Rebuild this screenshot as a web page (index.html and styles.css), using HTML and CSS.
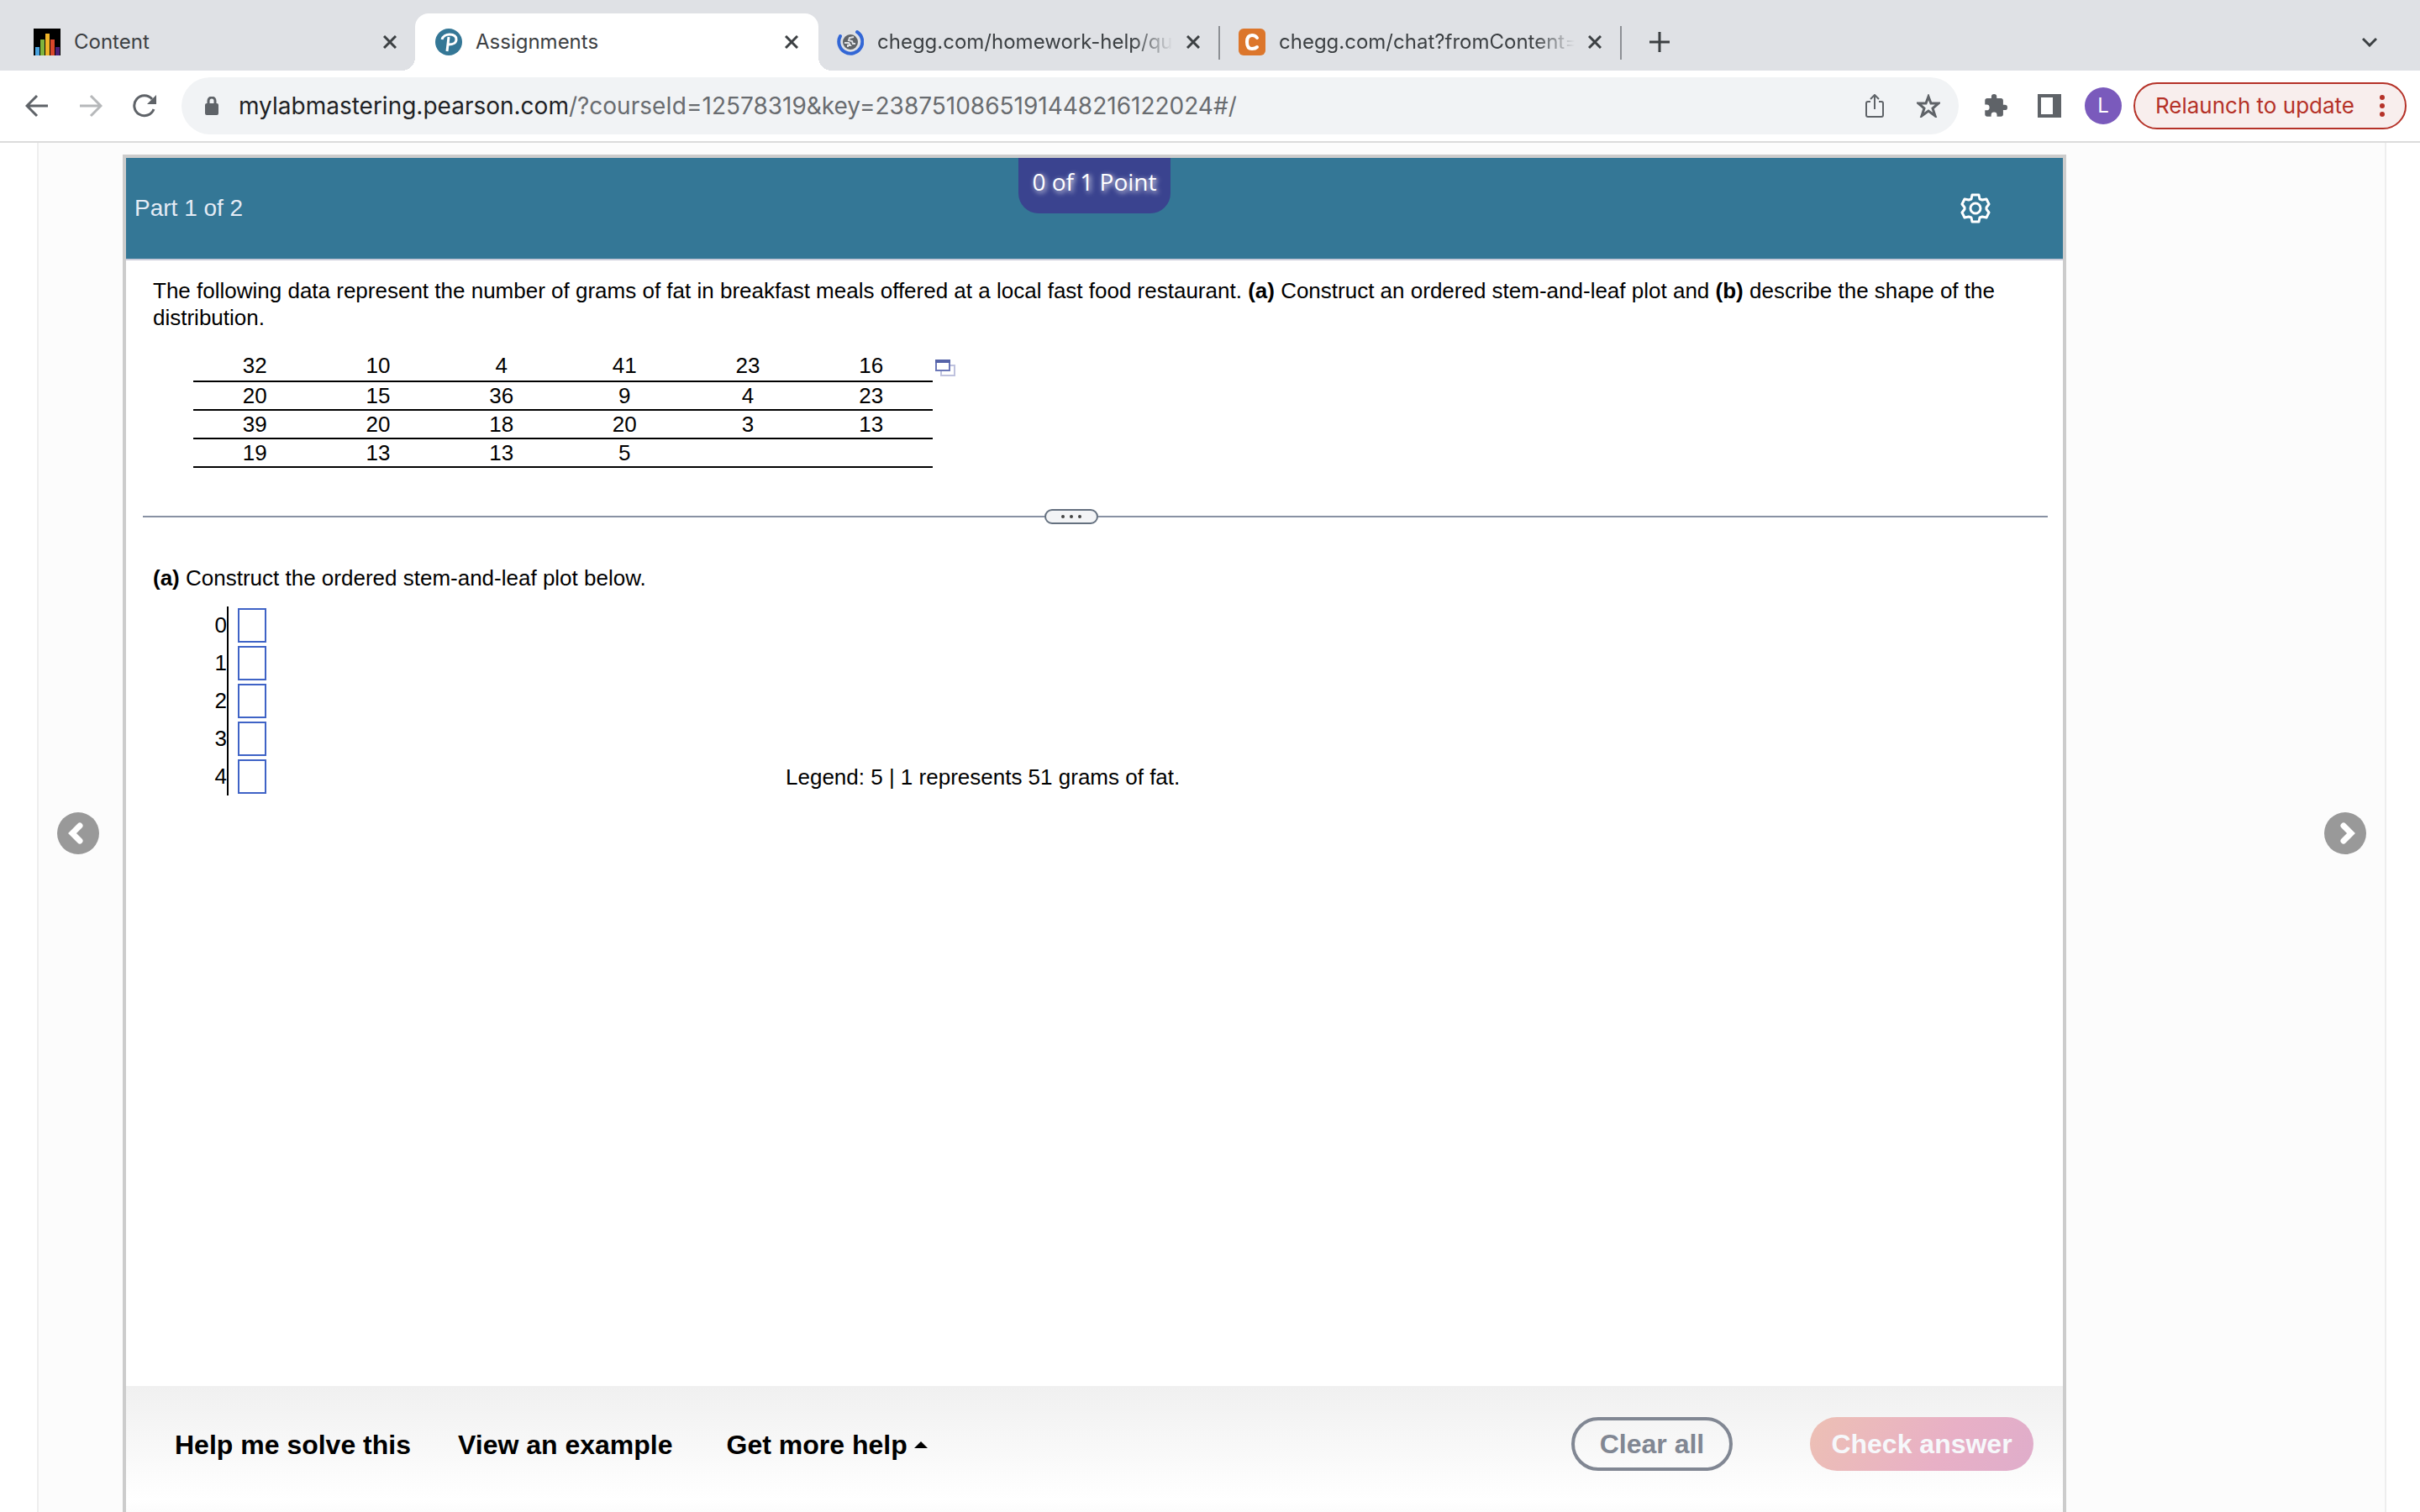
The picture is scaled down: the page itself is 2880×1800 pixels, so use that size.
FILE: index.html
```html
<!DOCTYPE html>
<html lang="en">
  <head>
    <meta charset="UTF-8" />
    <meta name="viewport" content="width=device-width, initial-scale=1.0" />
    <link rel="stylesheet" href="styles.css">
    <title>Assignments</title>
  </head>
  <body>
    <!-- tab strip -->
    <header class="tabs">
      <div class="tab">
        <svg class="favicon" viewBox="0 0 32 32">
          <rect width="32" height="32" fill="#000" />
          <rect x="2" y="22" width="5" height="10" fill="#4aa3df" />
          <rect x="8" y="13" width="5" height="19" fill="#7fb43c" />
          <rect x="14" y="6" width="5" height="26" fill="#f0b429" />
          <rect x="20" y="13" width="5" height="19" fill="#d9472b" />
          <rect x="26" y="22" width="5" height="10" fill="#4b1f7a" />
        </svg>
        <span class="title">Content</span>
        <button class="close" aria-label="Close tab">
          <svg viewBox="0 0 16 16"><path d="M1 1L15 15M15 1L1 15" /></svg>
        </button>
      </div>
      <div class="tab active">
        <svg class="favicon" viewBox="0 0 32 32">
          <circle cx="16" cy="16" r="16" fill="#347796" />
          <path d="M8 13C9 9 13 7 17 7C22 7 25 9 25 13C25 17 21 19 16 19M16 10L14 27" fill="none" stroke="#fff" stroke-width="3" />
        </svg>
        <span class="title">Assignments</span>
        <button class="close" aria-label="Close tab">
          <svg viewBox="0 0 16 16"><path d="M1 1L15 15M15 1L1 15" /></svg>
        </button>
      </div>
      <div class="tab divided">
        <svg class="favicon" viewBox="0 0 32 32">
          <path d="M4 9A14 14 0 1 0 24 4" fill="none" stroke="#3367d6" stroke-width="4" stroke-linecap="round" />
          <circle cx="16" cy="16" r="9" fill="#5f6368" />
          <path d="M9 17H14L16 20H13V22M20 10L15 11L14 14L18 15L19 18H22" fill="none" stroke="#dfe1e5" stroke-width="2" />
        </svg>
        <span class="title fade">chegg.com/homework-help/qu</span>
        <button class="close" aria-label="Close tab">
          <svg viewBox="0 0 16 16"><path d="M1 1L15 15M15 1L1 15" /></svg>
        </button>
      </div>
      <div class="tab divided">
        <svg class="favicon" viewBox="0 0 32 32">
          <rect width="32" height="32" rx="6" fill="#dc762b" />
          <path d="M22 11C20 8 18 8 16 8C12 8 10 11 10 16C10 21 12 24 16 24C18 24 20 24 22 22" fill="none" stroke="#fff" stroke-width="4" stroke-linecap="round" />
        </svg>
        <span class="title fade">chegg.com/chat?fromContent=</span>
        <button class="close" aria-label="Close tab">
          <svg viewBox="0 0 16 16"><path d="M1 1L15 15M15 1L1 15" /></svg>
        </button>
      </div>
      <button class="new-tab" aria-label="New tab">
        <svg viewBox="0 0 24 24"><path d="M12 0V24M0 12H24" /></svg>
      </button>
      <button class="tab-search" aria-label="Search tabs">
        <svg viewBox="0 0 18 12"><path d="M1 2L9 10L17 2" /></svg>
      </button>
    </header>

    <!-- toolbar -->
    <div class="toolbar">
      <button class="tool" aria-label="Back">
        <svg viewBox="0 0 28 28"><path class="line" d="M27 14H3M14 2L2 14L14 26" /></svg>
      </button>
      <button class="tool off" aria-label="Forward">
        <svg viewBox="0 0 28 28"><path class="line" d="M1 14H25M14 2L26 14L14 26" /></svg>
      </button>
      <button class="tool" aria-label="Reload">
        <svg viewBox="0 0 28 28">
          <path class="line" d="M25 18A12 12 0 1 1 23 6" />
          <path d="M28 1V12H17Z" />
        </svg>
      </button>
      <div class="address">
        <svg class="lock" viewBox="0 0 16 22">
          <path d="M2 8H14Q16 8 16 10V20Q16 22 14 22H2Q0 22 0 20V10Q0 8 2 8Z" />
          <path class="line" d="M4 9V5A4 4 0 0 1 12 5V9" />
        </svg>
        <a class="url" href="#/">mylabmastering.pearson.com<span>/?courseId=12578319&amp;key=2387510865191448216122024#/</span></a>
        <button class="tool" aria-label="Share">
          <svg viewBox="0 0 28 28"><path class="thin" d="M9 9H6Q4 9 4 11V25Q4 27 6 27H22Q24 27 24 25V11Q24 9 22 9H19M14 18V1M9 6L14 1L19 6" /></svg>
        </button>
        <button class="tool" aria-label="Bookmark">
          <svg viewBox="0 0 28 28"><path class="line" d="M14 3L17 11L26 11L19 17L22 26L14 20L6 26L9 17L2 11L11 11Z" /></svg>
        </button>
      </div>
      <button class="tool" aria-label="Extensions">
        <svg viewBox="1 1 22 22"><path d="M20.500 11H19V7c0-1.100-.9-2-2-2h-4V3.500a2.500 2.500 0 0 0-5 0V5H4c-1.100 0-2 .9-2 2v3.800h1.500a2.700 2.700 0 0 1 0 5.400H2V20c0 1.100.9 2 2 2h3.800v-1.500a2.700 2.700 0 0 1 5.400 0V22H17c1.100 0 2-.9 2-2v-4h1.500a2.500 2.500 0 0 0 0-5z" /></svg>
      </button>
      <button class="tool" aria-label="Side panel">
        <svg viewBox="0 0 28 28"><path fill-rule="evenodd" d="M0 0H28V28H0ZM4 4V24H18V4Z" /></svg>
      </button>
      <button class="avatar">L</button>
      <button class="relaunch">
        Relaunch to update
        <svg viewBox="0 0 6 26"><circle cx="3" cy="3" r="3" /><circle cx="3" cy="13" r="3" /><circle cx="3" cy="23" r="3" /></svg>
      </button>
    </div>

    <div class="page">
      <div class="side">
        <button class="nav" aria-label="Previous question">
          <svg viewBox="0 0 50 50"><path d="M27 16L18 25L27 34" /></svg>
        </button>
      </div>

      <main class="panel">
        <div class="panel-head">
          <span class="part">Part 1 of 2</span>
          <span class="points">0 of 1 Point</span>
          <button class="settings" aria-label="Settings">
            <svg viewBox="0 0 36 36">
              <path d="M14 2H22L23 7L26 8L31 7L34 13L31 17V19L34 23L31 29L26 28L23 29L22 34H14L13 29L10 28L5 29L2 23L5 19V17L2 13L5 7L10 8L13 7Z" />
              <circle cx="18" cy="18" r="6" />
            </svg>
          </button>
        </div>

        <section class="question">
          <p>The following data represent the number of grams of fat in breakfast meals offered at a local fast food restaurant. <b>(a)</b> Construct an ordered stem-and-leaf plot and <b>(b)</b> describe the shape of the distribution.</p>
          <div class="data">
            <table>
              <tr><td>32</td><td>10</td><td>4</td><td>41</td><td>23</td><td>16</td></tr>
              <tr><td>20</td><td>15</td><td>36</td><td>9</td><td>4</td><td>23</td></tr>
              <tr><td>39</td><td>20</td><td>18</td><td>20</td><td>3</td><td>13</td></tr>
              <tr><td>19</td><td>13</td><td>13</td><td>5</td><td></td><td></td></tr>
            </table>
            <button class="popup" aria-label="Open data">
              <svg viewBox="0 0 24 20">
                <rect x="7" y="7" width="16" height="12" fill="#fff" stroke="#bfc2de" stroke-width="2" />
                <rect x="1" y="1" width="16" height="12" fill="#fff" stroke="#6b77b8" stroke-width="2" />
                <rect x="0" y="0" width="18" height="4" fill="#5563a8" />
              </svg>
            </button>
          </div>
        </section>

        <div class="splitter">
          <button aria-label="Resize question"><i></i><i></i><i></i></button>
        </div>

        <section class="answer">
          <p><b>(a)</b> Construct the ordered stem-and-leaf plot below.</p>
          <div class="plot">
            <div class="stems">
              <div class="stem"><label for="leaf0">0</label><input id="leaf0" type="text" /></div>
              <div class="stem"><label for="leaf1">1</label><input id="leaf1" type="text" /></div>
              <div class="stem"><label for="leaf2">2</label><input id="leaf2" type="text" /></div>
              <div class="stem"><label for="leaf3">3</label><input id="leaf3" type="text" /></div>
              <div class="stem"><label for="leaf4">4</label><input id="leaf4" type="text" /></div>
            </div>
            <span class="legend">Legend: 5 | 1 represents 51 grams of fat.</span>
          </div>
        </section>

        <footer class="actions">
          <button class="link">Help me solve this</button>
          <button class="link">View an example</button>
          <button class="link more">Get more help <svg viewBox="0 0 16 8"><path d="M8 0L16 8H0Z" /></svg></button>
          <button class="clear">Clear all</button>
          <button class="check">Check answer</button>
        </footer>
      </main>

      <div class="side right">
        <button class="nav" aria-label="Next question">
          <svg viewBox="0 0 50 50"><path d="M23 16L32 25L23 34" /></svg>
        </button>
      </div>
    </div>
  </body>
</html>
```

FILE: styles.css
```css
/* Basic Style */

* {
  box-sizing: border-box;
}
body {
  display: flex;
  flex-direction: column;
  min-height: 100vh;
  margin: 0;
  background: #fff;
  color: #000;
  font-family: "Liberation Sans", Arial, sans-serif;
  font-size: 26px;
  line-height: 32px;
}
button {
  display: flex;
  align-items: center;
  justify-content: center;
  padding: 0;
  border: 0;
  background: none;
  color: inherit;
  font: inherit;
  cursor: pointer;
}
svg {
  display: block;
  flex: none;
}

/* Tabs */
.tabs {
  display: flex;
  align-items: flex-end;
  height: 84px;
  padding: 0 48px 0 16px;
  background: #dfe1e5;
  color: #3c4043;
  font-family: Inter, sans-serif;
  font-size: 24px;
}
.tab {
  position: relative;
  display: flex;
  align-items: center;
  gap: 16px;
  width: 478px;
  height: 68px;
  padding: 0 22px 0 24px;
}
.tab.active {
  width: 480px;
  padding-right: 24px;
  background: #fff;
  border-radius: 16px 16px 0 0;
}
/* curved feet of the selected tab */
.tab.active::before,
.tab.active::after {
  content: "";
  position: absolute;
  bottom: 0;
  width: 16px;
  height: 16px;
}
.tab.active::before {
  right: 100%;
  background: radial-gradient(circle at 0 0, #dfe1e5 16px, #fff 16px);
}
.tab.active::after {
  left: 100%;
  background: radial-gradient(circle at 100% 0, #dfe1e5 16px, #fff 16px);
}
.tab.divided {
  padding: 0 24px 0 22px;
}
.tab.divided::after {
  content: "";
  position: absolute;
  right: 0;
  top: 15px;
  width: 2px;
  height: 40px;
  background: #8d9095;
}
.favicon {
  width: 32px;
  height: 32px;
}
.title {
  flex: 1;
  overflow: hidden;
  white-space: nowrap;
}
.title.fade {
  -webkit-mask-image: linear-gradient(to left, transparent, #000 48px);
  mask-image: linear-gradient(to left, transparent, #000 48px);
}
.close svg {
  width: 16px;
  height: 16px;
}
.tabs button svg {
  fill: none;
  stroke: #3c4043;
  stroke-width: 3px;
}
.tabs button {
  height: 68px;
}
.new-tab {
  width: 90px;
}
.new-tab svg {
  width: 24px;
  height: 24px;
}
.tab-search {
  width: 24px;
  margin-left: auto;
}
.tab-search svg {
  width: 18px;
  height: 12px;
}

/* Toolbar */
.toolbar {
  display: flex;
  align-items: center;
  height: 86px;
  padding: 0 16px 0 12px;
  border-bottom: 2px solid #dcdcdc;
  font-family: Inter, sans-serif;
}
.toolbar svg {
  fill: #5f6368;
}
.toolbar .line,
.toolbar .thin {
  fill: none;
  stroke: #5f6368;
  stroke-width: 3px;
}
.toolbar .thin {
  stroke-width: 2px;
}
.tool {
  width: 64px;
  height: 64px;
}
.tool svg {
  width: 28px;
  height: 28px;
}
.tool.off {
  opacity: 0.45;
}
.address {
  display: flex;
  flex: 1;
  align-items: center;
  height: 68px;
  margin: 0 12px;
  padding: 0 4px 0 28px;
  border-radius: 34px;
  background: #f1f3f5;
}
.lock {
  width: 16px;
  height: 22px;
}
.url {
  flex: 1;
  margin-left: 24px;
  color: #202124;
  font-size: 28px;
  text-decoration: none;
  white-space: nowrap;
}
.url span {
  color: #696c70;
}
.avatar {
  width: 44px;
  height: 44px;
  margin: 0 14px 0 10px;
  border-radius: 50%;
  background: #7a5abc;
  color: #fff;
  font-size: 24px;
}
.relaunch {
  gap: 30px;
  height: 56px;
  padding: 0 24px;
  border: 2px solid #b53228;
  border-radius: 28px;
  background: #f8eeed;
  color: #b53228;
}
.relaunch svg {
  width: 6px;
  height: 26px;
  fill: #b53228;
}

/* Page */
.page {
  display: flex;
  flex: 1;
  margin: 0 40px 0 44px;
  border: 2px solid #eee;
  border-width: 0 2px;
  background: #fcfcfc;
}
.side {
  flex: none;
  width: 100px;
  padding: 797px 0 0 22px;
}
.side.right {
  width: 379px;
  padding-left: 307px;
}
.nav {
  width: 50px;
  height: 50px;
  border-radius: 50%;
  background: #999;
}
.nav svg {
  width: 50px;
  height: 50px;
  fill: none;
  stroke: #fff;
  stroke-width: 7px;
  stroke-linecap: round;
}
.panel {
  display: flex;
  flex: 1;
  flex-direction: column;
  margin-top: 14px;
  border: 4px solid #ccc;
  border-bottom: 0;
  background: #fff;
}
.panel-head {
  display: grid;
  grid-template-columns: 1fr auto 1fr;
  align-items: center;
  height: 122px;
  padding: 0 10px;
  border-bottom: 2px solid #c9cbd9;
  background: #347796;
}
.part {
  color: #e4ebf5;
  font-size: 28px;
}
.points {
  align-self: start;
  height: 66px;
  padding: 12px 16px;
  border-radius: 0 0 24px 24px;
  background: #3a438f;
  color: #fff;
  font-family: "Open Sans", sans-serif;
  font-size: 28px;
  font-weight: 500;
  text-shadow: 2px 2px 6px #fff;
}
.settings {
  justify-self: end;
  margin-right: 76px;
}
.settings svg {
  width: 36px;
  height: 36px;
  fill: none;
  stroke: #fff;
  stroke-width: 3px;
  stroke-linejoin: round;
}

/* Question */
.question {
  padding: 20px 32px 49px;
}
p {
  margin: 0;
}
.data {
  display: flex;
  gap: 3px;
  margin: 24px 0 0 48px;
}
table {
  width: 880px;
  table-layout: fixed;
  border-collapse: collapse;
}
td {
  height: 34px;
  padding: 0;
  border-bottom: 2px solid #000;
  text-align: center;
}
tr:first-child td {
  height: 36px;
  padding-bottom: 2px;
}
.popup {
  align-self: flex-start;
  height: 40px;
}
.popup svg {
  width: 24px;
  height: 20px;
}

/* Splitter */
.splitter {
  display: flex;
  align-items: center;
  margin: 0 18px 0 20px;
}
.splitter::before,
.splitter::after {
  content: "";
  flex: 19;
  height: 2px;
  background: #8891a3;
}
.splitter::after {
  flex: 20;
}
.splitter button {
  gap: 6px;
  width: 64px;
  height: 18px;
  border: 2px solid #64707f;
  border-radius: 9px;
  background: #f3f4f6;
}
.splitter i {
  width: 4px;
  height: 4px;
  border-radius: 50%;
  background: #444;
}

/* Answer */
.answer {
  flex: 1;
  padding: 48px 32px;
}
.plot {
  display: flex;
  align-items: flex-end;
  margin: 18px 0 0 72px;
}
.stem {
  display: flex;
  align-items: center;
  height: 45px;
}
.stem label {
  width: 18px;
  border-right: 2px solid #000;
  line-height: 45px;
  text-align: right;
}
.stem input {
  width: 34px;
  height: 41px;
  margin-left: 11px;
  padding: 0;
  border: 2px solid #3f63c6;
  background: #fff;
  font: inherit;
  text-align: center;
}
.legend {
  margin: 0 0 6px 618px;
}

/* Footer */
.actions {
  display: flex;
  align-items: center;
  height: 150px;
  padding: 0 35px 12px 58px;
  background: linear-gradient(#f0f0f0, #fff 135px, #fcfcfc);
  font-size: 32px;
  font-weight: 700;
}
.link {
  margin-right: 56px;
  padding-top: 2px;
}
.more {
  gap: 8px;
  margin-left: 8px;
}
.more svg {
  width: 16px;
  height: 8px;
}
.clear,
.check {
  height: 64px;
  border-radius: 32px;
}
.clear {
  width: 192px;
  margin: 0 92px 0 auto;
  border: 4px solid #818793;
  color: #818793;
}
.check {
  width: 266px;
  background: linear-gradient(120deg, #edc0b4, #e8b0c6 60%, #dfadcb);
  color: #f6f8fb;
}
```
